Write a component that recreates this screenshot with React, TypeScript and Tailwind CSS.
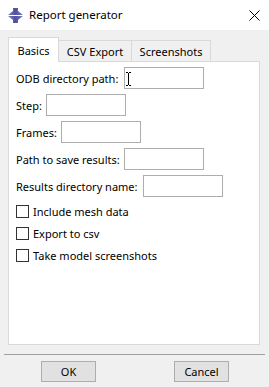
import React from "react";

const font = { fontFamily: '"Noto Sans", "Segoe UI", Arial, sans-serif' };

function Field({ label, lw }: { label: string; lw: string }) {
  return (
    <div className="flex items-center h-[22px]">
      <span className={`${lw} shrink-0 text-[11px] text-black whitespace-nowrap leading-none`}>{label}</span>
      <div className="w-[80px] h-[22px] shrink-0 border border-[#adadad] bg-white" />
    </div>
  );
}

function Check({ label }: { label: string }) {
  return (
    <div className="flex items-center h-[13px]">
      <div className="w-[13px] h-[13px] border border-[#333333] bg-white" />
      <span className="ml-[4px] text-[11px] text-black leading-none whitespace-nowrap">{label}</span>
    </div>
  );
}

export default function App() {
  return (
    <div className="w-[269px] h-[387px] bg-[#f0f0f0] flex flex-col overflow-hidden" style={font}>
      <div className="h-[30px] bg-white flex items-center shrink-0">
        <svg width="15" height="15" viewBox="0 0 15 15" className="ml-[8px]">
          <defs>
            <linearGradient id="g" x1="0" y1="0" x2="1" y2="0">
              <stop offset="0" stopColor="#7c80c4" />
              <stop offset="0.5" stopColor="#4d519e" />
              <stop offset="1" stopColor="#7c80c4" />
            </linearGradient>
          </defs>
          <polygon points="5,0 10,0 10,3 15,7 0,7 5,3" fill="url(#g)" />
          <polygon points="0,8 15,8 10,12 10,15 5,15 5,12" fill="url(#g)" />
        </svg>
        <span className="ml-[6px] text-[11.5px] text-black leading-none">Report generator</span>
        <svg width="11" height="11" viewBox="0 0 11 11" className="ml-auto mr-[9px]">
          <path d="M0.5 0.5 L10.5 10.5 M10.5 0.5 L0.5 10.5" stroke="#000" strokeWidth="1" />
        </svg>
      </div>
      <div className="flex items-end h-[24px] mt-[7px] ml-[8px] shrink-0">
        <div className="relative z-10 w-[51px] h-[25px] -mb-px bg-white border border-b-0 border-[#d9d9d9] flex items-center justify-center text-[11px] text-black leading-none">
          Basics
        </div>
        <div className="w-[73px] h-[21px] bg-[#f0f0f0] border-t border-r border-[#d9d9d9] flex items-center justify-center text-[11px] text-black leading-none">
          CSV Export
        </div>
        <div className="w-[79px] h-[21px] bg-[#f0f0f0] border-t border-r border-[#d9d9d9] flex items-center justify-center text-[11px] text-black leading-none">
          Screenshots
        </div>
      </div>
      <div className="ml-[8px] w-[252px] h-[284px] bg-white border border-[#d9d9d9] shrink-0 pt-[5px] pl-[7px]">
        <div className="flex flex-col gap-[5px]">
          <div className="relative">
            <Field label="ODB directory path:" lw="w-[108px]" />
            <svg width="5" height="14" viewBox="0 0 5 14" className="absolute left-[110px] top-[5px]">
              <path d="M0 0.5 H2 M3 0.5 H5 M2.5 1 V13 M0 13.5 H2 M3 13.5 H5" stroke="#000" strokeWidth="1" />
            </svg>
          </div>
          <Field label="Step:" lw="w-[30px]" />
          <Field label="Frames:" lw="w-[45px]" />
          <Field label="Path to save results:" lw="w-[108px]" />
          <Field label="Results directory name:" lw="w-[127px]" />
        </div>
        <div className="flex flex-col gap-[9px] mt-[8px]">
          <Check label="Include mesh data" />
          <Check label="Export to csv" />
          <Check label="Take model screenshots" />
        </div>
      </div>
      <div className="mt-[9px] mx-[4px] h-px bg-[#a0a0a0] shrink-0" />
      <div className="flex mt-[6px] shrink-0">
        <div className="ml-[41px] w-[55px] h-[21px] bg-[#e1e1e1] border border-[#adadad] flex items-center justify-center text-[11px] text-black leading-none">
          OK
        </div>
        <div className="ml-[78px] w-[55px] h-[21px] bg-[#e1e1e1] border border-[#adadad] flex items-center justify-center text-[11px] text-black leading-none">
          Cancel
        </div>
      </div>
    </div>
  );
}
